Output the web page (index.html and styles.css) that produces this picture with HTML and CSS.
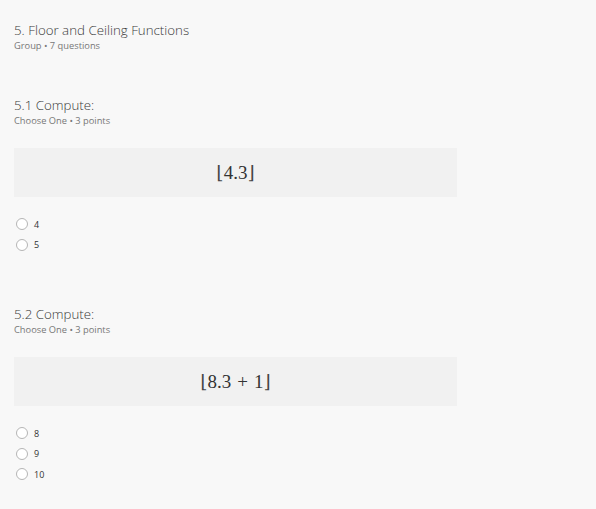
FILE: index.html
```html
<!DOCTYPE html>
<html>
<head>
<meta charset="utf-8">
<link rel="stylesheet" href="styles.css">
</head>
<body>
<div class="page">
  <header class="group">
    <h1 class="title">5. Floor and Ceiling Functions</h1>
    <div class="meta">Group • 7 questions</div>
  </header>

  <section class="question">
    <h2 class="qtitle">5.1 Compute:</h2>
    <div class="meta">Choose One • 3 points</div>
    <div class="mathbox"><span class="math"><span class="br">⌊</span>4.3<span class="br">⌋</span></span></div>
    <ul class="options">
      <li class="option"><span class="radio"></span><span class="label">4</span></li>
      <li class="option"><span class="radio"></span><span class="label">5</span></li>
    </ul>
  </section>

  <section class="question">
    <h2 class="qtitle">5.2 Compute:</h2>
    <div class="meta">Choose One • 3 points</div>
    <div class="mathbox"><span class="math"><span class="br">⌊</span>8.3<span class="op">+</span>1<span class="br">⌋</span></span></div>
    <ul class="options">
      <li class="option"><span class="radio"></span><span class="label">8</span></li>
      <li class="option"><span class="radio"></span><span class="label">9</span></li>
      <li class="option"><span class="radio"></span><span class="label">10</span></li>
    </ul>
  </section>
</div>
</body>
</html>
```
FILE: styles.css
```css
html, body {
  margin: 0;
  padding: 0;
  background: #f8f8f8;
}
body {
  font-family: "Open Sans", "Noto Sans", sans-serif;
  color: #444;
}
.page {
  padding: 21px 14px 0 14px;
  width: 443px;
}
.title, .qtitle {
  margin: 0;
  font-size: 13.3px;
  font-weight: 300;
  line-height: 18px;
  color: #3a3a3a;
}
.meta {
  font-size: 9.3px;
  line-height: 12px;
  color: #777;
  margin-top: 1px;
}
.group {
  margin-bottom: 44px;
}
.mathbox {
  margin-top: 21px;
  height: 49px;
  background: #f1f1f1;
  display: flex;
  align-items: center;
  justify-content: center;
}
.math {
  font-family: "Liberation Serif", "DejaVu Serif", serif;
  font-size: 19px;
  color: #333;
  display: flex;
  align-items: center;
}
.br {
  font-family: "DejaVu Serif", serif;
  font-weight: 300;
  font-size: 18px;
  color: #444;
}
.op {
  margin: 0 6px;
}
.options {
  list-style: none;
  margin: 17px 0 0 0;
  padding: 0;
}
.option {
  display: flex;
  align-items: center;
  height: 20.5px;
  padding-left: 2px;
}
.radio {
  border: 1px solid #b5b5b5;
  border-radius: 50%;
  background: #fff;
  box-sizing: border-box;
  width: 12px;
  height: 12px;
}
.label {
  font-size: 9px;
  color: #333;
  margin-left: 6px;
}
.question {
  margin-bottom: 50px;
}
.question:last-child {
  margin-bottom: 0;
}
```
